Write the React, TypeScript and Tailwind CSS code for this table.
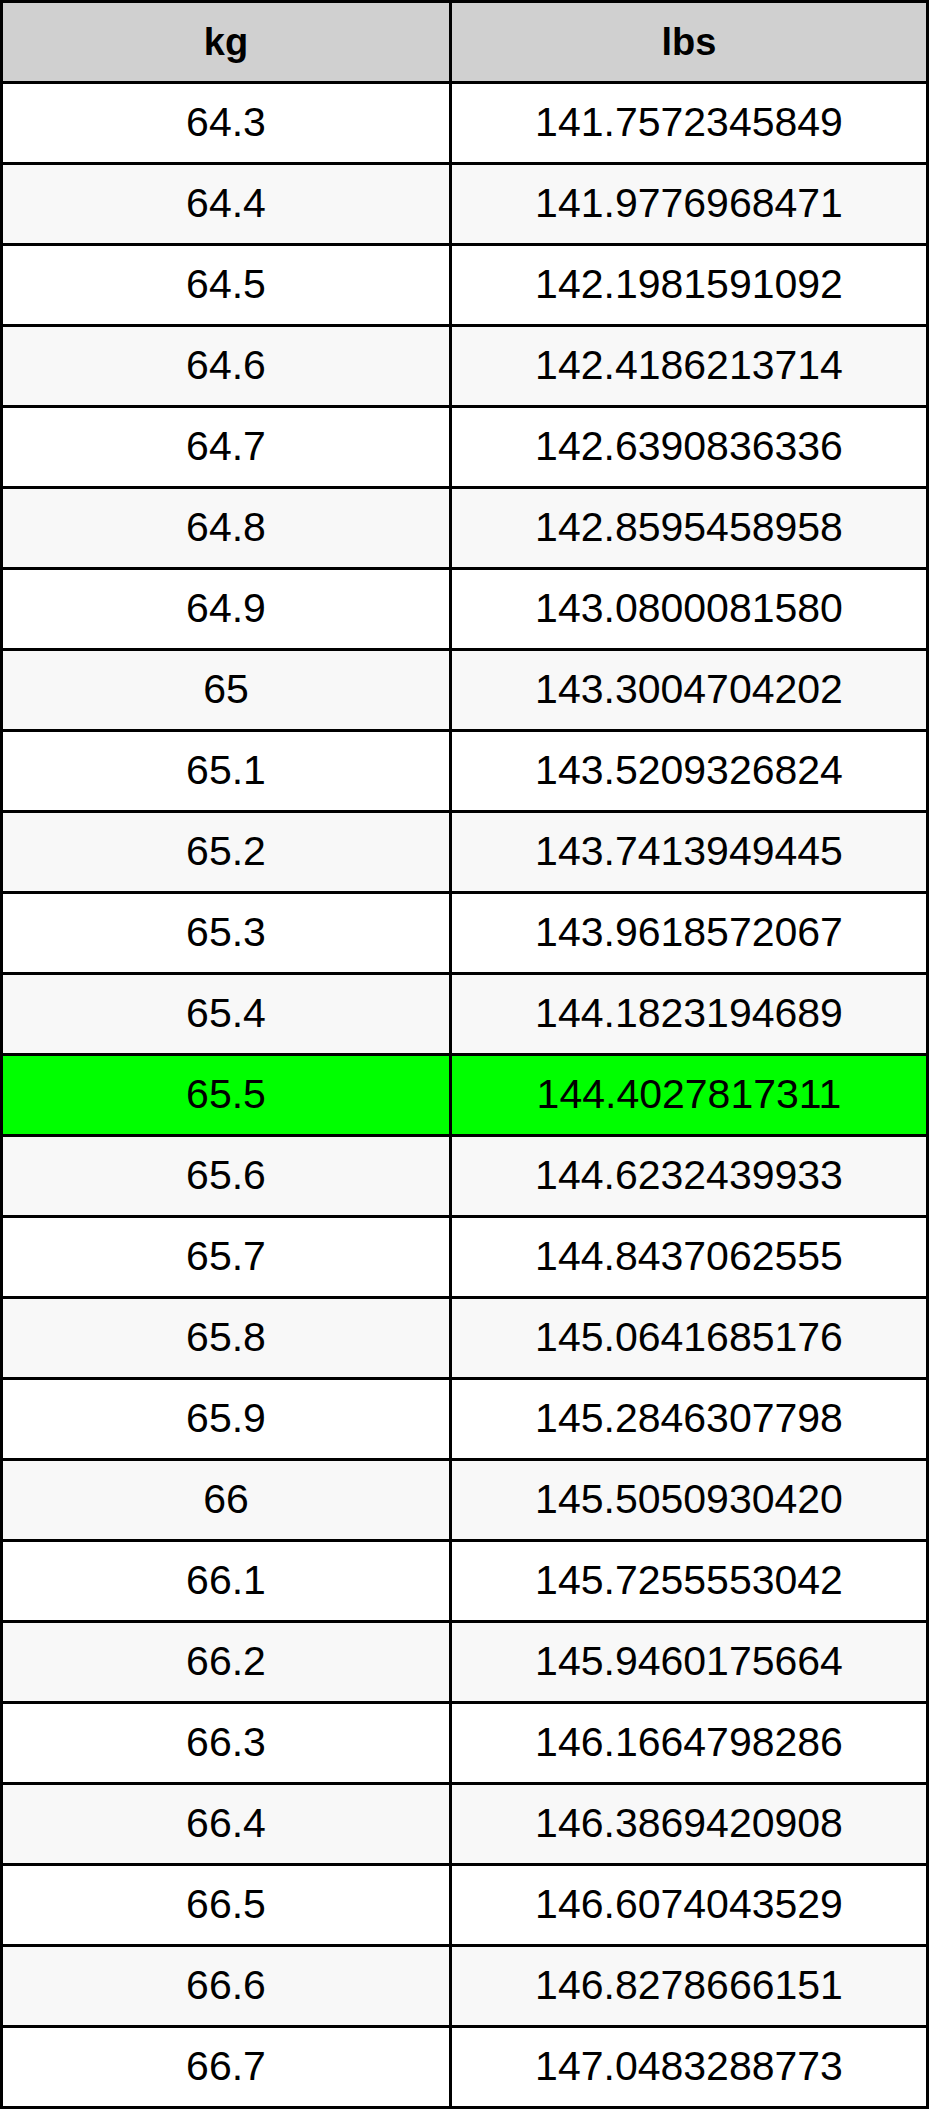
const rows: [string, string][] = [
  ['64.3', '141.7572345849'],
  ['64.4', '141.9776968471'],
  ['64.5', '142.1981591092'],
  ['64.6', '142.4186213714'],
  ['64.7', '142.6390836336'],
  ['64.8', '142.8595458958'],
  ['64.9', '143.0800081580'],
  ['65', '143.3004704202'],
  ['65.1', '143.5209326824'],
  ['65.2', '143.7413949445'],
  ['65.3', '143.9618572067'],
  ['65.4', '144.1823194689'],
  ['65.5', '144.4027817311'],
  ['65.6', '144.6232439933'],
  ['65.7', '144.8437062555'],
  ['65.8', '145.0641685176'],
  ['65.9', '145.2846307798'],
  ['66', '145.5050930420'],
  ['66.1', '145.7255553042'],
  ['66.2', '145.9460175664'],
  ['66.3', '146.1664798286'],
  ['66.4', '146.3869420908'],
  ['66.5', '146.6074043529'],
  ['66.6', '146.8278666151'],
  ['66.7', '147.0483288773'],
];

export default function App() {
  return (
    <div className="bg-white min-h-screen font-['Liberation_Sans',Arial,sans-serif] text-black">
      <table className="w-[929px] table-fixed border-collapse border-[3px] border-black">
        <colgroup>
          <col className="w-[449px]" />
          <col />
        </colgroup>
        <thead>
          <tr className="h-[81px] bg-[#d0d0d0]">
            <th className="border-[3px] border-black p-0 text-[38px] font-bold text-center">kg</th>
            <th className="border-[3px] border-black p-0 text-[38px] font-bold text-center">lbs</th>
          </tr>
        </thead>
        <tbody>
          {rows.map(([kg, lbs], i) => {
            const bg = kg === '65.5' ? 'bg-[#00ff00]' : i % 2 === 1 ? 'bg-[#f8f8f8]' : 'bg-white';
            return (
              <tr key={kg} className={`h-[81px] ${bg}`}>
                <td className="border-[3px] border-black p-0 text-[41px] text-center">{kg}</td>
                <td className="border-[3px] border-black p-0 text-[41px] text-center">{lbs}</td>
              </tr>
            );
          })}
        </tbody>
      </table>
    </div>
  );
}
